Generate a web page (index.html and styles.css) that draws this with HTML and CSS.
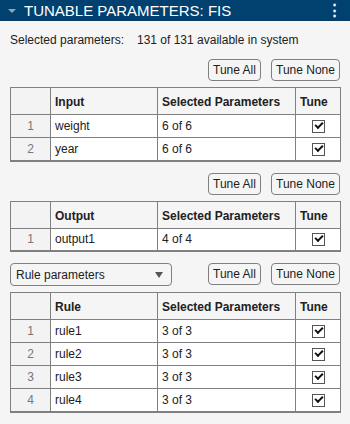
FILE: index.html
```html
<!DOCTYPE html>
<html lang="en">
<head>
    <meta charset="UTF-8">
    <meta name="viewport" content="width=device-width, initial-scale=1.0">
    <title>Tunable Parameters: FIS</title>
    <link rel="stylesheet" href="styles.css">
</head>
<body>
    <div class="header">
        <span class="caret"></span>
        <span class="title">TUNABLE PARAMETERS: FIS</span>
        <span class="menu">&#8942;</span>
    </div>

    <div class="content">
        <div class="summary">
            <span class="summary-label">Selected parameters:</span>
            <span>131 of 131 available in system</span>
        </div>

        <div class="toolbar">
            <button class="btn btn-all">Tune All</button>
            <button class="btn btn-none">Tune None</button>
        </div>
        <table class="param-table">
            <tr>
                <th class="idx"></th>
                <th class="name">Input</th>
                <th class="sel">Selected Parameters</th>
                <th class="tune">Tune</th>
            </tr>
            <tr>
                <td class="idx">1</td>
                <td>weight</td>
                <td>6 of 6</td>
                <td class="tune"><span class="check"></span></td>
            </tr>
            <tr>
                <td class="idx">2</td>
                <td>year</td>
                <td>6 of 6</td>
                <td class="tune"><span class="check"></span></td>
            </tr>
        </table>

        <div class="toolbar">
            <button class="btn btn-all">Tune All</button>
            <button class="btn btn-none">Tune None</button>
        </div>
        <table class="param-table">
            <tr>
                <th class="idx"></th>
                <th class="name">Output</th>
                <th class="sel">Selected Parameters</th>
                <th class="tune">Tune</th>
            </tr>
            <tr>
                <td class="idx">1</td>
                <td>output1</td>
                <td>4 of 4</td>
                <td class="tune"><span class="check"></span></td>
            </tr>
        </table>

        <div class="toolbar toolbar-split">
            <div class="dropdown">
                <span>Rule parameters</span>
                <span class="dropdown-arrow"></span>
            </div>
            <div class="btn-group">
                <button class="btn btn-all">Tune All</button>
                <button class="btn btn-none">Tune None</button>
            </div>
        </div>
        <table class="param-table">
            <tr>
                <th class="idx"></th>
                <th class="name">Rule</th>
                <th class="sel">Selected Parameters</th>
                <th class="tune">Tune</th>
            </tr>
            <tr>
                <td class="idx">1</td>
                <td>rule1</td>
                <td>3 of 3</td>
                <td class="tune"><span class="check"></span></td>
            </tr>
            <tr>
                <td class="idx">2</td>
                <td>rule2</td>
                <td>3 of 3</td>
                <td class="tune"><span class="check"></span></td>
            </tr>
            <tr>
                <td class="idx">3</td>
                <td>rule3</td>
                <td>3 of 3</td>
                <td class="tune"><span class="check"></span></td>
            </tr>
            <tr>
                <td class="idx">4</td>
                <td>rule4</td>
                <td>3 of 3</td>
                <td class="tune"><span class="check"></span></td>
            </tr>
        </table>
    </div>
</body>
</html>
```

FILE: styles.css
```css
* {
    margin: 0;
    padding: 0;
    box-sizing: border-box;
}

body {
    font-family: "Liberation Sans", Arial, sans-serif;
    font-size: 12px;
    color: #212121;
    background: #f5f5f5;
    width: 350px;
    height: 424px;
    overflow: hidden;
}

.header {
    display: flex;
    align-items: center;
    height: 21px;
    background: #004170;
    border-bottom: 1px solid #0b3a62;
    color: white;
    padding: 0 8px;
}

.caret {
    width: 0;
    height: 0;
    border-left: 4px solid transparent;
    border-right: 4px solid transparent;
    border-top: 4px solid #8fa5bb;
    margin-right: 8px;
    margin-top: 1px;
}

.title {
    font-size: 15px;
    flex: 1;
}

.menu {
    font-size: 15px;
    font-weight: bold;
}

.content {
    padding: 0 10px;
}

.summary {
    display: flex;
    height: 38px;
    align-items: center;
    white-space: nowrap;
}

.summary-label {
    width: 127px;
}

.toolbar {
    display: flex;
    justify-content: flex-end;
    gap: 10px;
    height: 22px;
    margin-bottom: 6px;
}

.toolbar-split {
    justify-content: space-between;
    height: 23px;
}

.btn-group {
    display: flex;
    gap: 10px;
}

.btn {
    font-family: "Liberation Sans", Arial, sans-serif;
    font-size: 12px;
    color: #212121;
    background: #f5f5f5;
    border: 1px solid #7f7f7f;
    border-radius: 4px;
    height: 22px;
}

.btn-all {
    width: 53px;
}

.btn-none {
    width: 69px;
}

.dropdown {
    display: flex;
    justify-content: space-between;
    align-items: center;
    width: 162px;
    height: 23px;
    border: 1px solid #7f7f7f;
    border-radius: 4px;
    background: #f5f5f5;
    padding: 0 8px 0 5px;
}

.dropdown-arrow {
    width: 0;
    height: 0;
    border-left: 4px solid transparent;
    border-right: 4px solid transparent;
    border-top: 6px solid #555;
}

.param-table {
    width: 330px;
    border-collapse: collapse;
    table-layout: fixed;
    border: 1px solid #808080;
    border-bottom: 2px solid #808080;
    margin-bottom: 11px;
    background: white;
}

.param-table th,
.param-table td {
    border: 1px solid #808080;
    text-align: left;
    padding: 0 4px;
    white-space: nowrap;
}

.param-table th {
    height: 27px;
    background: #f5f5f5;
    font-size: 12px;
    font-weight: bold;
    padding-top: 2px;
}

.param-table td {
    height: 23px;
}

.param-table .idx {
    width: 40px;
    background: #f3f3f3;
    color: #777;
    text-align: center;
}

.param-table .name {
    width: 107px;
}

.param-table .sel {
    width: 138px;
}

.param-table .tune {
    width: 45px;
    text-align: center;
}

.param-table th.tune {
    text-align: left;
}

.check {
    display: inline-block;
    vertical-align: middle;
    width: 13px;
    height: 13px;
    border: 1px solid #555;
    background: white;
    position: relative;
}

.check::after {
    content: "";
    position: absolute;
    left: 2px;
    top: 1px;
    width: 6px;
    height: 3px;
    border-left: 2px solid #111;
    border-bottom: 2px solid #111;
    transform: rotate(-45deg);
}
```
